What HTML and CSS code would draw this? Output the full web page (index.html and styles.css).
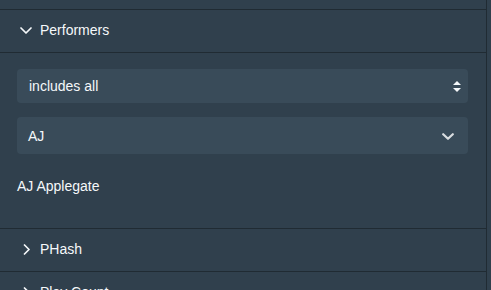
FILE: index.html
```html
<!DOCTYPE html>
<html>
<head>
<meta charset="utf-8">
<link rel="stylesheet" href="styles.css">
</head>
<body>
<div class="app">
  <div class="panel">
    <div class="item item-top"></div>
    <div class="item open">
      <div class="item-header">
        <span class="icon"><svg width="12" height="7" viewBox="0 0 12 7"><path d="M1 1 L6 6 L11 1" fill="none" stroke="#f5f8fa" stroke-width="1.7" stroke-linecap="round" stroke-linejoin="round"/></svg></span>
        <span class="label">Performers</span>
      </div>
      <div class="item-body">
        <div class="select">
          <span>includes all</span>
          <svg class="updown" width="8" height="11" viewBox="0 0 8 11"><path d="M4 0 L0 4 H8 Z M4 11 L0 7 H8 Z" fill="#f5f8fa"/></svg>
        </div>
        <div class="combo">
          <span>AJ</span>
          <svg width="12" height="7" viewBox="0 0 12 7"><path d="M1.2 1.2 L6 5.8 L10.8 1.2" fill="none" stroke="#d9dde0" stroke-width="2.2" stroke-linecap="round" stroke-linejoin="round"/></svg>
        </div>
        <div class="result">AJ Applegate</div>
      </div>
    </div>
    <div class="item">
      <div class="item-header">
        <span class="icon"><svg width="7" height="11" viewBox="0 0 7 11"><path d="M1.5 1 L6 5.5 L1.5 10" fill="none" stroke="#f5f8fa" stroke-width="1.7" stroke-linecap="round" stroke-linejoin="round"/></svg></span>
        <span class="label">PHash</span>
      </div>
    </div>
    <div class="item">
      <div class="item-header">
        <span class="icon"><svg width="7" height="11" viewBox="0 0 7 11"><path d="M1.5 1 L6 5.5 L1.5 10" fill="none" stroke="#f5f8fa" stroke-width="1.7" stroke-linecap="round" stroke-linejoin="round"/></svg></span>
        <span class="label">Play Count</span>
      </div>
    </div>
  </div>
  <div class="gutter"></div>
</div>
</body>
</html>
```

FILE: styles.css
```css
html, body {
  margin: 0;
  padding: 0;
  background: #30404d;
  overflow: hidden;
}
body {
  font-family: "Liberation Sans", Arial, sans-serif;
  font-size: 14px;
  line-height: 21px;
  color: #f5f8fa;
}
.app {
  display: flex;
  height: 290px;
}
.panel {
  width: 486px;
  border-right: 1px solid #202b33;
  flex: none;
}
.gutter {
  flex: 1;
  background: #30404d;
}
.item {
  border-bottom: 1px solid #202b33;
}
.item-top {
  height: 9px;
}
.item-header {
  height: 42px;
  display: flex;
  align-items: center;
  padding-left: 20px;
  box-sizing: border-box;
  padding-bottom: 2px;
}
.item.open .item-header {
  border-bottom: 1px solid #202b33;
  height: 43px;
}
.icon {
  width: 12px;
  display: flex;
  justify-content: center;
  margin-right: 8px;
}
.icon svg {
  display: block;
}
.item-body {
  padding: 16px 18px 31px 17px;
}
.select {
  height: 34px;
  background: #394b59;
  border-radius: 4px;
  display: flex;
  align-items: center;
  justify-content: space-between;
  padding: 0 7px 0 12px;
  box-sizing: border-box;
}
.select svg { display: block; }
.combo {
  margin-top: 14px;
  height: 37px;
  background: #394b59;
  border-radius: 4px;
  display: flex;
  align-items: center;
  justify-content: space-between;
  padding: 1px 14px 0 11px;
  box-sizing: border-box;
}
.combo svg { display: block; }
.result {
  margin-top: 22px;
}
```
